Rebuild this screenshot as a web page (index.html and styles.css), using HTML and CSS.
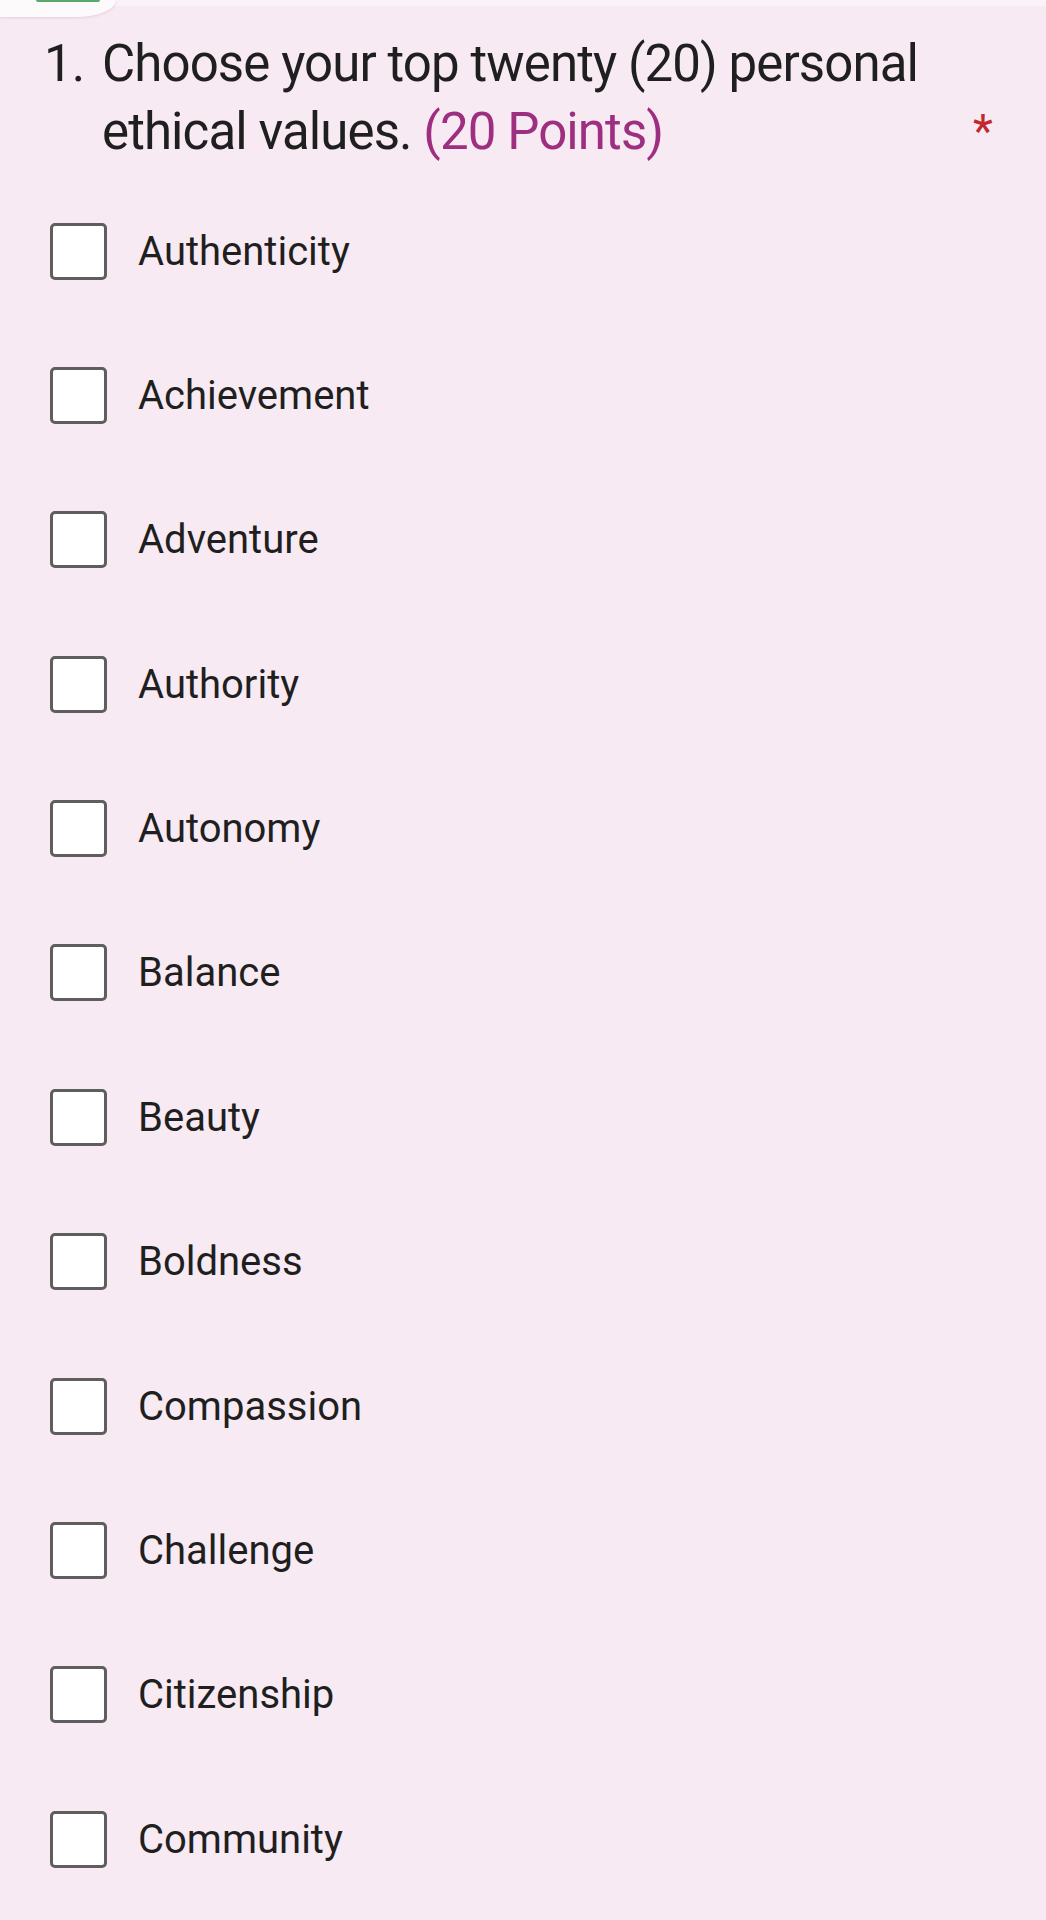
FILE: index.html
```html
<!DOCTYPE html>
<html lang="en">
<head>
<meta charset="utf-8">
<title>Ethical values</title>
<link rel="stylesheet" href="styles.css">
</head>
<body>
<div class="topbar"></div>
<div class="tab"><span class="tab-green"></span></div>
<main class="form">
  <div class="question">
    <span class="qnum">1.</span>
    <span class="qtext">Choose your top twenty (20) personal ethical values. <span class="points">(20 Points)</span></span>
    <span class="req">*</span>
  </div>
  <ul class="options">
    <li class="option"><span class="box"></span><span class="label">Authenticity</span></li>
    <li class="option"><span class="box"></span><span class="label">Achievement</span></li>
    <li class="option"><span class="box"></span><span class="label">Adventure</span></li>
    <li class="option"><span class="box"></span><span class="label">Authority</span></li>
    <li class="option"><span class="box"></span><span class="label">Autonomy</span></li>
    <li class="option"><span class="box"></span><span class="label">Balance</span></li>
    <li class="option"><span class="box"></span><span class="label">Beauty</span></li>
    <li class="option"><span class="box"></span><span class="label">Boldness</span></li>
    <li class="option"><span class="box"></span><span class="label">Compassion</span></li>
    <li class="option"><span class="box"></span><span class="label">Challenge</span></li>
    <li class="option"><span class="box"></span><span class="label">Citizenship</span></li>
    <li class="option"><span class="box"></span><span class="label">Community</span></li>
  </ul>
</main>
</body>
</html>
```
FILE: styles.css
```css
html, body {
  margin: 0;
  padding: 0;
}
body {
  width: 1046px;
  min-height: 1920px;
  background: #f8eaf3;
  font-family: Roboto, "Noto Sans", "Liberation Sans", sans-serif;
  color: #1f1f1f;
  position: relative;
  overflow: hidden;
}
.topbar {
  height: 6px;
  background: #fbf3f8;
}
.tab {
  position: absolute;
  left: 0;
  top: 0;
  width: 116px;
  height: 17px;
  background: #fdfafc;
  border-bottom-right-radius: 40px 17px;
  box-shadow: 0 1px 3px rgba(120, 90, 110, 0.18);
}
.tab-green {
  position: absolute;
  left: 36px;
  top: 0;
  width: 64px;
  height: 2px;
  background: #5aa86a;
  border-radius: 0 0 2px 2px;
}
.form {
  padding: 24px 0 0 0;
}
.question {
  display: flex;
  align-items: flex-end;
  padding-left: 44px;
  padding-right: 54px;
  font-size: 51px;
  line-height: 68px;
  letter-spacing: -0.9px;
}
.qnum {
  flex: 0 0 58px;
  align-self: flex-start;
}
.qtext {
  flex: 1;
}
.points {
  color: #9e2f80;
}
.req {
  color: #c1272d;
  font-size: 46px;
  line-height: 68px;
  position: relative;
  top: -1px;
}
.options {
  list-style: none;
  margin: 13px 0 0 0;
  padding: 0;
}
.option {
  height: 144.36px;
  display: flex;
  align-items: center;
  padding-left: 50px;
}
.box {
  width: 57px;
  height: 57px;
  box-sizing: border-box;
  border: 3px solid #5e5e5e;
  border-radius: 5px;
  background: #ffffff;
  flex: 0 0 auto;
}
.label {
  margin-left: 31px;
  font-size: 40px;
  color: #1f1f1f;
}
```
